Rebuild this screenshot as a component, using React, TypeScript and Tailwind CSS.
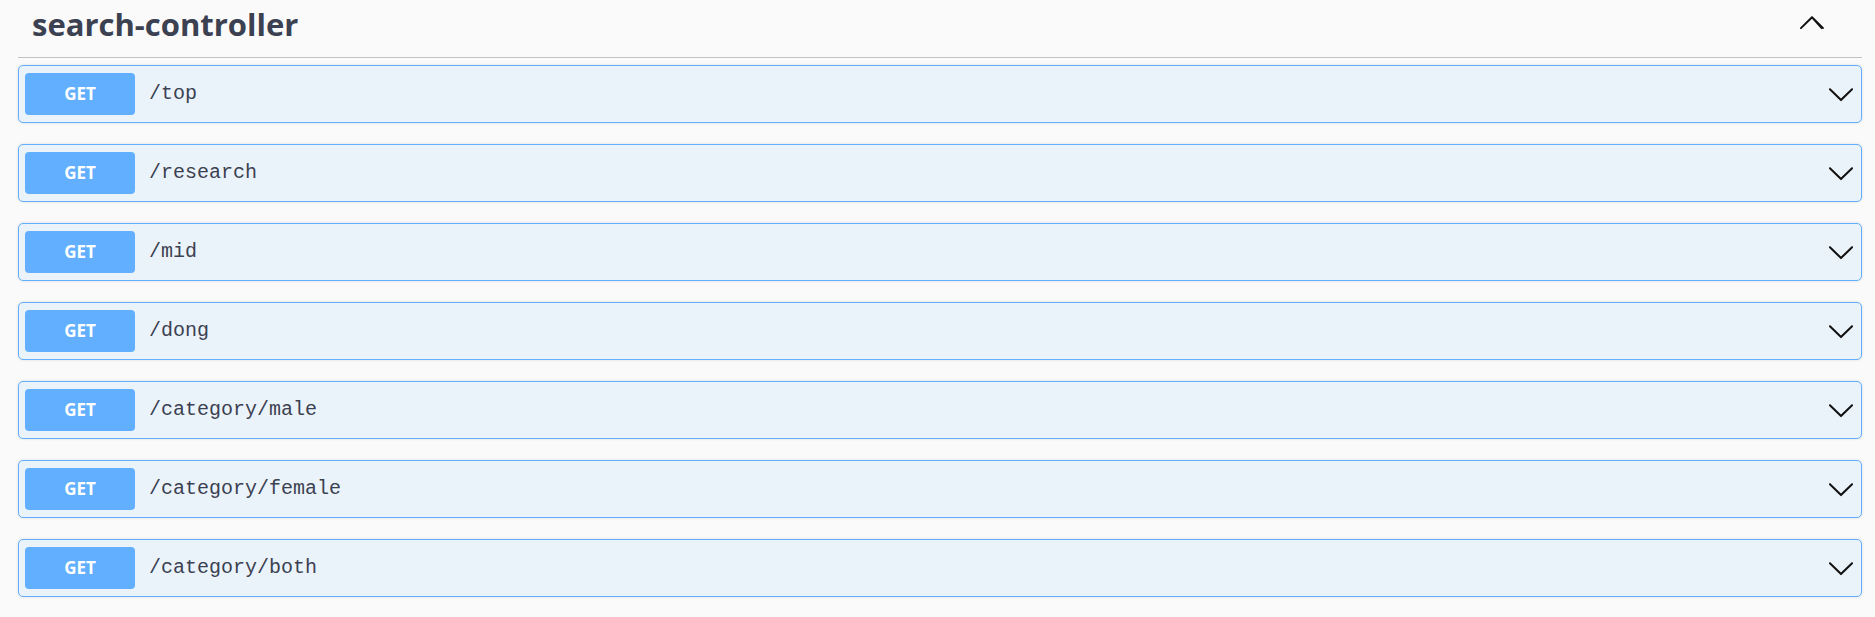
const paths = ['/top', '/research', '/mid', '/dong', '/category/male', '/category/female', '/category/both'];

function Arrow({ up = false }: { up?: boolean }) {
  return (
    <svg width="28" height="28" viewBox="0 0 20 20" className="shrink-0 fill-[#111]">
      {up ? (
        <path d="M17.418 14.908c-.272.268-.709.268-.979 0L10 7.767l-7.418 7.141c-.27.268-.707.268-.979 0-.27-.268-.27-.701 0-.969l7.908-7.83c.27-.268.707-.268.979 0l7.908 7.83c.27.268.27.702 0 .969z" />
      ) : (
        <path d="M17.418 6.109c.272-.268.709-.268.979 0s.271.701 0 .969l-7.908 7.83c-.27.268-.707.268-.979 0l-7.908-7.83c-.27-.268-.27-.701 0-.969.271-.268.709-.268.979 0L10 13.25l7.418-7.141z" />
      )}
    </svg>
  );
}

function Operation({ path }: { path: string }) {
  return (
    <div className="mb-[21px] flex h-[58px] items-center rounded-[5px] border border-[#61affe] bg-[#ebf3fa] px-[6px] shadow-[0_0_3px_rgba(0,0,0,0.12)]">
      <span className="flex h-[42px] w-[110px] shrink-0 items-center justify-center rounded-[4px] bg-[#61affe] font-['Open_Sans',sans-serif] text-[17px] font-bold text-white">
        GET
      </span>
      <span className="flex-1 pl-[14px] font-['Liberation_Mono',monospace] text-[20px] text-[#3b4151]">{path}</span>
      <Arrow />
    </div>
  );
}

export default function App() {
  return (
    <div className="min-h-[617px] w-full bg-[#fafafa]">
      <div className="ml-[18px] w-[1844px]">
        <div className="mb-[7px] flex h-[58px] items-center border-b border-[#c1c3c7] pl-[14px] pr-[36px]">
          <h3 className="flex-1 pb-[10px] font-['Open_Sans',sans-serif] text-[31px] font-bold leading-[40px] text-[#3b4151]">
            search-controller
          </h3>
          <div className="pb-[14px]">
            <Arrow up />
          </div>
        </div>
        {paths.map((p) => (
          <Operation key={p} path={p} />
        ))}
      </div>
    </div>
  );
}
